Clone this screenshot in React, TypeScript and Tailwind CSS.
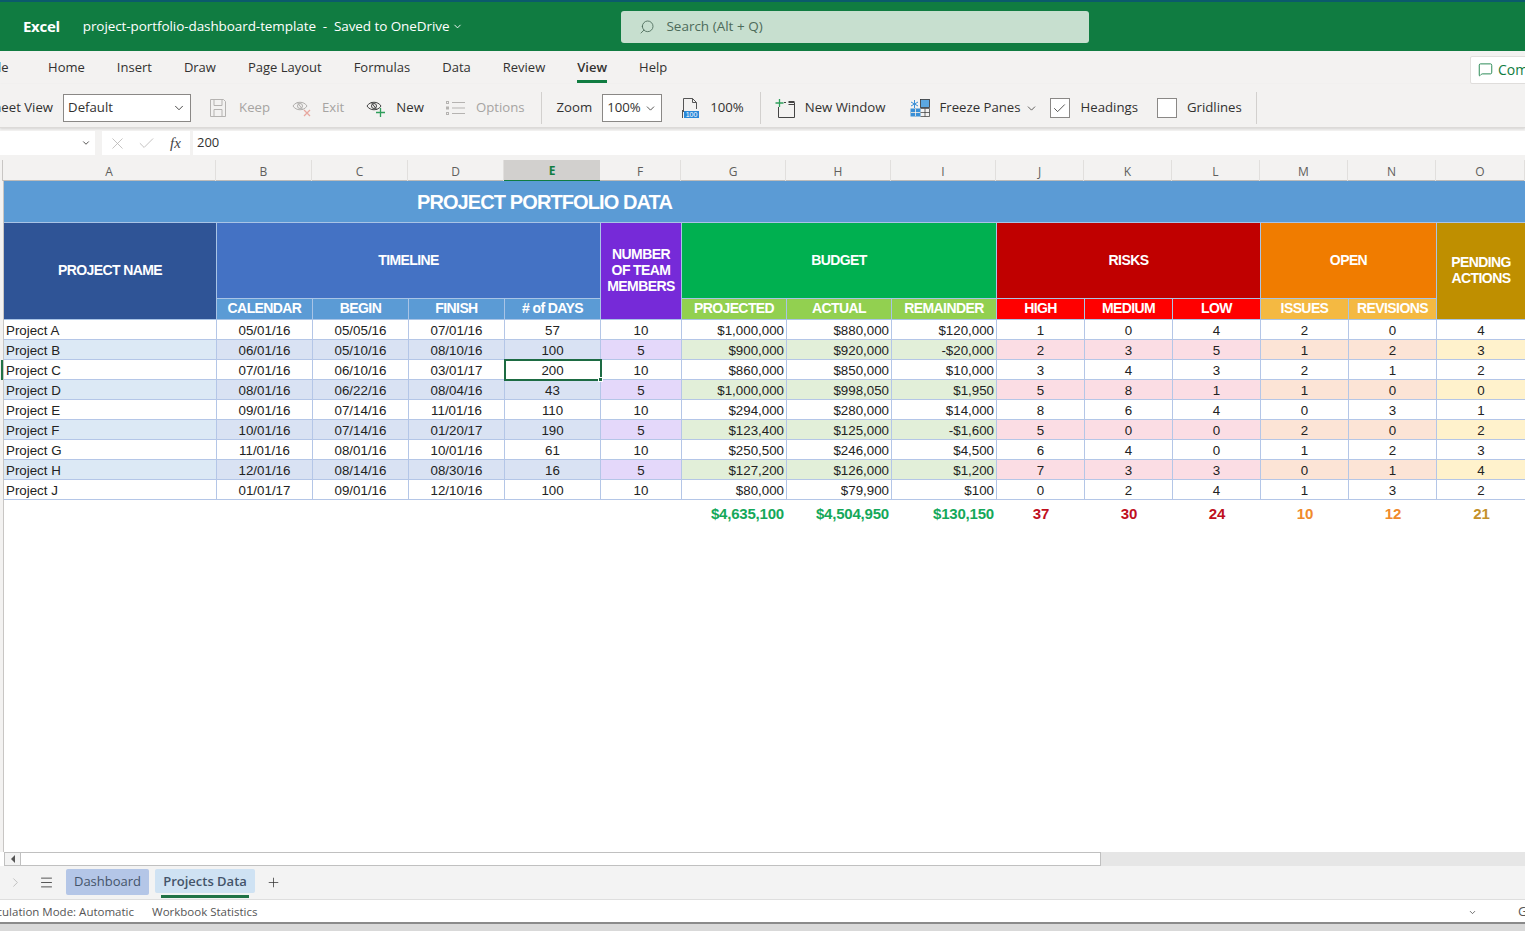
import React from 'react';
import { ChevronDown, Search, MessageSquare, Menu, Plus, ChevronRight, X, Check } from 'lucide-react';

const COLS = 'grid grid-cols-[213px_96px_96px_96px_96px_81px_105px_105px_105px_88px_88px_88px_88px_88px_89px]';

const letters = ['A', 'B', 'C', 'D', 'E', 'F', 'G', 'H', 'I', 'J', 'K', 'L', 'M', 'N', 'O'];

const rows = [
    ['Project A', '05/01/16', '05/05/16', '07/01/16', '57', '10', '$1,000,000', '$880,000', '$120,000', '1', '0', '4', '2', '0', '4'],
    ['Project B', '06/01/16', '05/10/16', '08/10/16', '100', '5', '$900,000', '$920,000', '-$20,000', '2', '3', '5', '1', '2', '3'],
    ['Project C', '07/01/16', '06/10/16', '03/01/17', '200', '10', '$860,000', '$850,000', '$10,000', '3', '4', '3', '2', '1', '2'],
    ['Project D', '08/01/16', '06/22/16', '08/04/16', '43', '5', '$1,000,000', '$998,050', '$1,950', '5', '8', '1', '1', '0', '0'],
    ['Project E', '09/01/16', '07/14/16', '11/01/16', '110', '10', '$294,000', '$280,000', '$14,000', '8', '6', '4', '0', '3', '1'],
    ['Project F', '10/01/16', '07/14/16', '01/20/17', '190', '5', '$123,400', '$125,000', '-$1,600', '5', '0', '0', '2', '0', '2'],
    ['Project G', '11/01/16', '08/01/16', '10/01/16', '61', '10', '$250,500', '$246,000', '$4,500', '6', '4', '0', '1', '2', '3'],
    ['Project H', '12/01/16', '08/14/16', '08/30/16', '16', '5', '$127,200', '$126,000', '$1,200', '7', '3', '3', '0', '1', '4'],
    ['Project J', '01/01/17', '09/01/16', '12/10/16', '100', '10', '$80,000', '$79,900', '$100', '0', '2', '4', '1', '3', '2'],
];

const stripes = [
    'bg-[#dce9f5]', 'bg-[#d9e2f3]', 'bg-[#d9e2f3]', 'bg-[#d9e2f3]', 'bg-[#d9e2f3]', 'bg-[#e4d8fa]',
    'bg-[#e2efd9]', 'bg-[#e2efd9]', 'bg-[#e2efd9]', 'bg-[#fbdde4]', 'bg-[#fbdde4]', 'bg-[#fbdde4]',
    'bg-[#fce4d6]', 'bg-[#fce4d6]', 'bg-[#fff2cc]',
];

const totals = [
    { text: '$4,635,100', cls: 'text-[#14a85a] justify-end pr-[3px]' },
    { text: '$4,504,950', cls: 'text-[#14a85a] justify-end pr-[3px]' },
    { text: '$130,150', cls: 'text-[#14a85a] justify-end pr-[3px]' },
    { text: '37', cls: 'text-[#c00f1e] justify-center' },
    { text: '30', cls: 'text-[#c00f1e] justify-center' },
    { text: '24', cls: 'text-[#c00f1e] justify-center' },
    { text: '10', cls: 'text-[#f08a2c] justify-center' },
    { text: '12', cls: 'text-[#f08a2c] justify-center' },
    { text: '21', cls: 'text-[#c4912a] justify-center' },
];

const Head: React.FC<{ className: string; children: React.ReactNode }> = ({ className, children }) => (
    <div className={`flex items-center justify-center text-center font-bold text-white tracking-[-0.6px] border-r border-b border-[#a9c4e6] ${className}`}>
        {children}
    </div>
);

const RibbonLabel: React.FC<{ className?: string; children: React.ReactNode }> = ({ className = '', children }) => (
    <span className={`text-[13.2px] whitespace-nowrap ${className}`}>{children}</span>
);

const Divider: React.FC<{ className: string }> = ({ className }) => <div className={`w-px h-[32px] bg-[#d2d0ce] ${className}`} />;

const App: React.FC = () => {
    return (
        <div className="w-[1525px] h-[931px] overflow-hidden flex flex-col bg-white font-['Open_Sans',sans-serif] text-[#323130]">
            {/* Title bar */}
            <header className="h-[51px] shrink-0 bg-[#107c41] border-t-[2px] border-[#0b5a6c] flex items-center text-white">
                <span className="ml-[23px] text-[15px] font-bold tracking-[-0.3px]">Excel</span>
                <span className="ml-[23px] text-[13.5px] tracking-[-0.08px] whitespace-nowrap">project-portfolio-dashboard-template&nbsp; - &nbsp;Saved to OneDrive</span>
                <ChevronDown size={11} className="ml-[3px]" />
                <div className="ml-[158px] w-[468px] h-[32px] rounded-[3px] bg-[#c7dfcf] flex items-center text-[#4d6b5a]">
                    <Search size={16} strokeWidth={1.3} className="ml-[18px] -scale-x-100" />
                    <span className="ml-[11px] text-[13.5px]">Search (Alt + Q)</span>
                </div>
            </header>

            {/* Ribbon tabs */}
            <nav className="h-[33px] shrink-0 bg-[#f3f2f1] flex items-center relative text-[13px]">
                <div className="flex items-center gap-[32px] ml-[-12px]">
                    <span className="mr-[7.5px]">File</span>
                    <span>Home</span>
                    <span>Insert</span>
                    <span>Draw</span>
                    <span>Page Layout</span>
                    <span>Formulas</span>
                    <span>Data</span>
                    <span>Review</span>
                    <span className="relative font-semibold">
                        View
                        <span className="absolute left-0 right-0 -bottom-[6px] h-[3px] bg-[#107c41]" />
                    </span>
                    <span>Help</span>
                </div>
                <div className="ml-auto mr-[-10px] mt-[4px] w-[65px] h-[28px] bg-white border border-[#e1dfdd] rounded-[2px] flex items-center text-[#107c41] overflow-hidden">
                    <MessageSquare size={15} strokeWidth={1.4} className="ml-[7px] shrink-0" />
                    <span className="ml-[5px] text-[14px]">Comments</span>
                </div>
            </nav>

            {/* Ribbon toolbar */}
            <div className="h-[44px] shrink-0 bg-[#f3f2f1] border-b border-[#dcdad8] shadow-[0_1px_2px_rgba(0,0,0,0.12)] flex items-center pt-[5px] z-10 overflow-hidden">
                <RibbonLabel className="ml-[-14px]">Sheet View</RibbonLabel>
                <div className="ml-[10px] w-[128px] h-[28px] bg-white border border-[#8a8886] flex items-center justify-between px-[4px] text-[13.2px] shrink-0">
                    Default
                    <ChevronDown size={14} strokeWidth={1.5} />
                </div>
                <svg width="18" height="20" viewBox="0 0 18 20" fill="none" stroke="#b5b3b1" strokeWidth="1" className="ml-[18px] shrink-0">
                    <path d="M1.5 1.5h13l2 2v15h-15z" />
                    <path d="M5 1.5v6h8v-6M5 18.5v-7h8v7" />
                </svg>
                <RibbonLabel className="ml-[12px] text-[#a6a4a2]">Keep</RibbonLabel>
                <svg width="20" height="18" viewBox="0 0 20 18" fill="none" className="ml-[22px] shrink-0">
                    <path d="M1 7c3-5 11-5 14 0-3 5-11 5-14 0z" stroke="#b0aeac" />
                    <circle cx="8" cy="7" r="2.5" stroke="#b0aeac" />
                    <path d="M5 3l6 8" stroke="#b0aeac" />
                    <path d="M12 11l6 6M18 11l-6 6" stroke="#e8a79f" strokeWidth="1.3" />
                </svg>
                <RibbonLabel className="ml-[10px] text-[#a6a4a2]">Exit</RibbonLabel>
                <svg width="20" height="18" viewBox="0 0 20 18" fill="none" className="ml-[22px] shrink-0">
                    <path d="M1 7c3-5 11-5 14 0-3 5-11 5-14 0z" stroke="#444" />
                    <circle cx="8" cy="7" r="2.5" stroke="#444" />
                    <path d="M5 3l6 8" stroke="#444" />
                    <path d="M14.5 9v9M10 13.5h9" stroke="#2f9e5b" strokeWidth="1.3" />
                </svg>
                <RibbonLabel className="ml-[10px]">New</RibbonLabel>
                <svg width="19" height="15" viewBox="0 0 19 15" fill="none" stroke="#b5b3b1" className="ml-[22px] shrink-0">
                    <rect x="0.5" y="0.5" width="2" height="2" />
                    <rect x="0.5" y="6" width="2" height="2" />
                    <rect x="0.5" y="11.5" width="2" height="2" />
                    <path d="M6 1.5h13M6 7h13M6 12.5h13" />
                </svg>
                <RibbonLabel className="ml-[11px] text-[#a6a4a2]">Options</RibbonLabel>
                <Divider className="ml-[16px] shrink-0" />
                <RibbonLabel className="ml-[15px]">Zoom</RibbonLabel>
                <div className="ml-[10px] w-[60px] h-[28px] bg-white border border-[#8a8886] flex items-center justify-between px-[4px] text-[13.2px] shrink-0">
                    100%
                    <ChevronDown size={13} strokeWidth={1.5} />
                </div>
                <svg width="19" height="22" viewBox="0 0 19 22" fill="none" className="ml-[20px] shrink-0">
                    <path d="M1.5 15V1.5h9l4 4V12M10.5 1.5v4h4" stroke="#555" />
                    <path d="M0.5 13v8" stroke="#555" />
                    <rect x="2" y="14" width="15" height="7" fill="#2b88d8" />
                    <text x="9.5" y="20.2" textAnchor="middle" fontSize="7" fill="#fff" fontFamily="Liberation Sans, sans-serif">100</text>
                </svg>
                <RibbonLabel className="ml-[9px]">100%</RibbonLabel>
                <Divider className="ml-[16px] shrink-0" />
                <svg width="21" height="20" viewBox="0 0 21 20" fill="none" className="ml-[14px] shrink-0">
                    <path d="M9 4.5h2M3.5 9v10.500h16V4.5h-6M13.5 3.5h6M13.5 6.5h6" stroke="#444" />
                    <path d="M4.5 1v8M0.5 5h8" stroke="#2f9e5b" strokeWidth="1.3" />
                </svg>
                <RibbonLabel className="ml-[9px]">New Window</RibbonLabel>
                <svg width="20" height="18" viewBox="0 0 20 18" fill="none" className="ml-[24px] shrink-0">
                    <path d="M4.5 1v8M1 3l7 4M8 3L1 7" stroke="#3a8fd6" strokeWidth="1" />
                    <rect x="10.5" y="0.5" width="9" height="8" fill="#5ba7e0" stroke="#333" strokeWidth="0.8" />
                    <rect x="0.5" y="9.5" width="10" height="8" fill="#3a8fd6" />
                    <path d="M10.5 9.5h9v8h-9M0.5 13.5h19M5.500 9.5v8M15 9.5v8" stroke="#333" strokeWidth="0.7" />
                    <path d="M0.5 13.5h10M5.5 9.5v8" stroke="#fff" strokeWidth="0.8" />
                </svg>
                <RibbonLabel className="ml-[10px]">Freeze Panes</RibbonLabel>
                <ChevronDown size={13} strokeWidth={1.4} className="ml-[4px] shrink-0" />
                <div className="ml-[12px] w-[20px] h-[20px] bg-white border border-[#8a8886] flex items-center justify-center shrink-0">
                    <Check size={15} strokeWidth={1.3} />
                </div>
                <RibbonLabel className="ml-[11px]">Headings</RibbonLabel>
                <div className="ml-[19px] w-[20px] h-[20px] bg-white border border-[#8a8886] shrink-0" />
                <RibbonLabel className="ml-[10px]">Gridlines</RibbonLabel>
                <Divider className="ml-[14px] shrink-0" />
            </div>

            {/* Formula bar */}
            <div className="h-[32px] shrink-0 bg-[#f3f2f1] pt-[3px] pb-[5px] flex">
                <div className="w-[95px] bg-white flex items-center justify-end pr-[4px]">
                    <ChevronDown size={10} strokeWidth={2} />
                </div>
                <div className="ml-[7px] w-[88px] bg-white flex items-center text-[#b5b3b1]">
                    <X size={19} strokeWidth={1} className="ml-[6px]" />
                    <Check size={19} strokeWidth={1} className="ml-[10px]" />
                    <span className="ml-[14px] text-[15px] italic text-[#444] font-['Liberation_Serif',serif]">fx</span>
                </div>
                <div className="ml-[3px] flex-1 bg-white flex items-center pl-[4px] text-[13px]">200</div>
            </div>

            {/* Column letters */}
            <div className="h-[21px] shrink-0 bg-[#f3f2f1] flex">
                <div className="w-[4px] border-r border-[#c8c6c4]" />
                <div className={`${COLS} flex-1 border-b border-[#bdbbb9]`}>
                    {letters.map((l) => (
                        <div
                            key={l}
                            className={
                                l === 'E'
                                    ? 'flex items-center justify-center pt-[2px] text-[12px] font-bold bg-[#d2d0ce] text-[#107c41] border-b-[2px] border-[#107c41]'
                                    : 'flex items-center justify-center pt-[2px] text-[12px] text-[#605e5c] border-r border-[#e1dfdd]'
                            }
                        >
                            {l}
                        </div>
                    ))}
                </div>
            </div>

            {/* Sheet */}
            <div className="flex-1 flex min-h-0 font-['Liberation_Sans',sans-serif]">
                <div className="w-[4px] shrink-0 flex flex-col items-start border-r border-[#c8c6c4] bg-[#f3f2f1]">
                    <div className="h-[179px] shrink-0" />
                    <div className="h-[20px] w-[2px] ml-[1px] shrink-0 bg-[#217346]" />
                </div>
                <div className="flex-1 min-w-0">
                    <div className={COLS}>
                        <div className="col-span-10 h-[42px] bg-[#5b9bd5] border-b border-[#a9c4e6] flex items-center justify-center text-white text-[20px] font-bold tracking-[-0.9px]">
                            PROJECT PORTFOLIO DATA
                        </div>
                        <div className="col-span-5 h-[42px] bg-[#5b9bd5] border-b border-[#a9c4e6]" />

                        <Head className="row-span-2 bg-[#2f5496] text-[14px] pb-[2px]">PROJECT NAME</Head>
                        <Head className="col-span-4 h-[76px] bg-[#4472c4] text-[14px]">TIMELINE</Head>
                        <Head className="row-span-2 bg-[#762ad8] text-[14px] leading-[16px] pb-[2px]">NUMBER<br />OF TEAM<br />MEMBERS</Head>
                        <Head className="col-span-3 bg-[#00b050] text-[14px]">BUDGET</Head>
                        <Head className="col-span-3 bg-[#c00000] text-[14px]">RISKS</Head>
                        <Head className="col-span-2 bg-[#f07c00] text-[14px]">OPEN</Head>
                        <Head className="row-span-2 bg-[#bf8f00] text-[14px] leading-[16px] pb-[2px]">PENDING<br />ACTIONS</Head>

                        {['CALENDAR', 'BEGIN', 'FINISH', '# of DAYS'].map((t) => (
                            <Head key={t} className="h-[21px] pb-[1px] bg-[#5b9bd5] text-[14px]">{t}</Head>
                        ))}
                        {['PROJECTED', 'ACTUAL', 'REMAINDER'].map((t) => (
                            <Head key={t} className="h-[21px] pb-[1px] bg-[#92d050] text-[14px]">{t}</Head>
                        ))}
                        {['HIGH', 'MEDIUM', 'LOW'].map((t) => (
                            <Head key={t} className="h-[21px] pb-[1px] bg-[#ff0000] text-[14px]">{t}</Head>
                        ))}
                        {['ISSUES', 'REVISIONS'].map((t) => (
                            <Head key={t} className="h-[21px] pb-[1px] bg-[#f4b942] text-[14px]">{t}</Head>
                        ))}

                        {rows.map((row, r) =>
                            row.map((cell, c) => (
                                <div
                                    key={`${r}-${c}`}
                                    className={`relative h-[20px] pt-[2px] flex items-center text-[13.33px] text-[#222] border-r border-b border-[#b4c6e7] ${
                                        c === 0 ? 'justify-start pl-[2px]' : c >= 6 && c <= 8 ? 'justify-end pr-[2px]' : 'justify-center'
                                    } ${r % 2 === 1 ? stripes[c] : 'bg-white'}`}
                                >
                                    {cell}
                                    {r === 2 && c === 4 && (
                                        <div className="absolute z-10 -left-px -top-px w-[98px] h-[22px] border-[2px] border-[#1d6b43]">
                                            <div className="absolute -right-[3px] -bottom-[3px] w-[5px] h-[5px] bg-[#1d6b43] border border-white" />
                                        </div>
                                    )}
                                </div>
                            ))
                        )}

                        <div className="col-span-6 h-[27px]" />
                        {totals.map((t) => (
                            <div key={t.text} className={`h-[27px] pt-[1px] flex items-center text-[15px] font-bold tracking-[-0.2px] ${t.cls}`}>
                                {t.text}
                            </div>
                        ))}
                    </div>
                </div>
            </div>

            {/* Horizontal scrollbar */}
            <div className="h-[14px] shrink-0 flex bg-[#e6e6e6]">
                <div className="w-[4px] bg-white" />
                <div className="w-[17px] bg-[#f3f3f3] border border-[#c0c0c0] flex items-center justify-center">
                    <div className="w-0 h-0 border-y-[4px] border-y-transparent border-r-[4px] border-r-[#555]" />
                </div>
                <div className="w-[1080px] bg-white border border-l-0 border-[#c0c0c0]" />
            </div>

            {/* Sheet tabs */}
            <div className="h-[34px] shrink-0 bg-[#f3f3f3] border-b border-[#dedede] flex items-start">
                <ChevronRight size={15} strokeWidth={1.3} className="ml-[8px] mt-[9px] text-[#b5b5b5]" />
                <Menu size={15} strokeWidth={1.3} className="ml-[16px] mt-[9px] text-[#333]" />
                <div className="ml-[12px] mt-[3px] w-[83px] h-[26px] rounded-[2px] bg-[#b4c6e7] flex items-center justify-center text-[13px] text-[#44546a]">
                    Dashboard
                </div>
                <div className="relative ml-[6px] mt-[3px] w-[100px] h-[24px] pt-[1px] rounded-[2px] bg-[#cfe2f3] flex items-center justify-center text-[13px] font-semibold text-[#44546a]">
                    Projects Data
                    <span className="absolute left-[6px] right-[6px] -bottom-[5px] h-[3px] bg-[#217346]" />
                </div>
                <Plus size={15} strokeWidth={1.2} className="ml-[11px] mt-[9px] text-[#333]" />
            </div>

            {/* Status bar */}
            <div className="h-[22px] shrink-0 bg-white pt-[2px] flex items-center text-[11.5px] text-[#555]">
                <span className="ml-[-20px] whitespace-nowrap">Calculation Mode: Automatic</span>
                <span className="ml-[18px] whitespace-nowrap">Workbook Statistics</span>
                <ChevronDown size={9} strokeWidth={2.2} className="ml-auto mr-[41px]" />
                <span className="mr-[-5px] w-[12px] text-[13px]">G</span>
            </div>

            <div className="h-[9px] shrink-0 bg-[#d9d9d9] border-t-[2px] border-[#8a8a8a]" />
        </div>
    );
};

export default App;
